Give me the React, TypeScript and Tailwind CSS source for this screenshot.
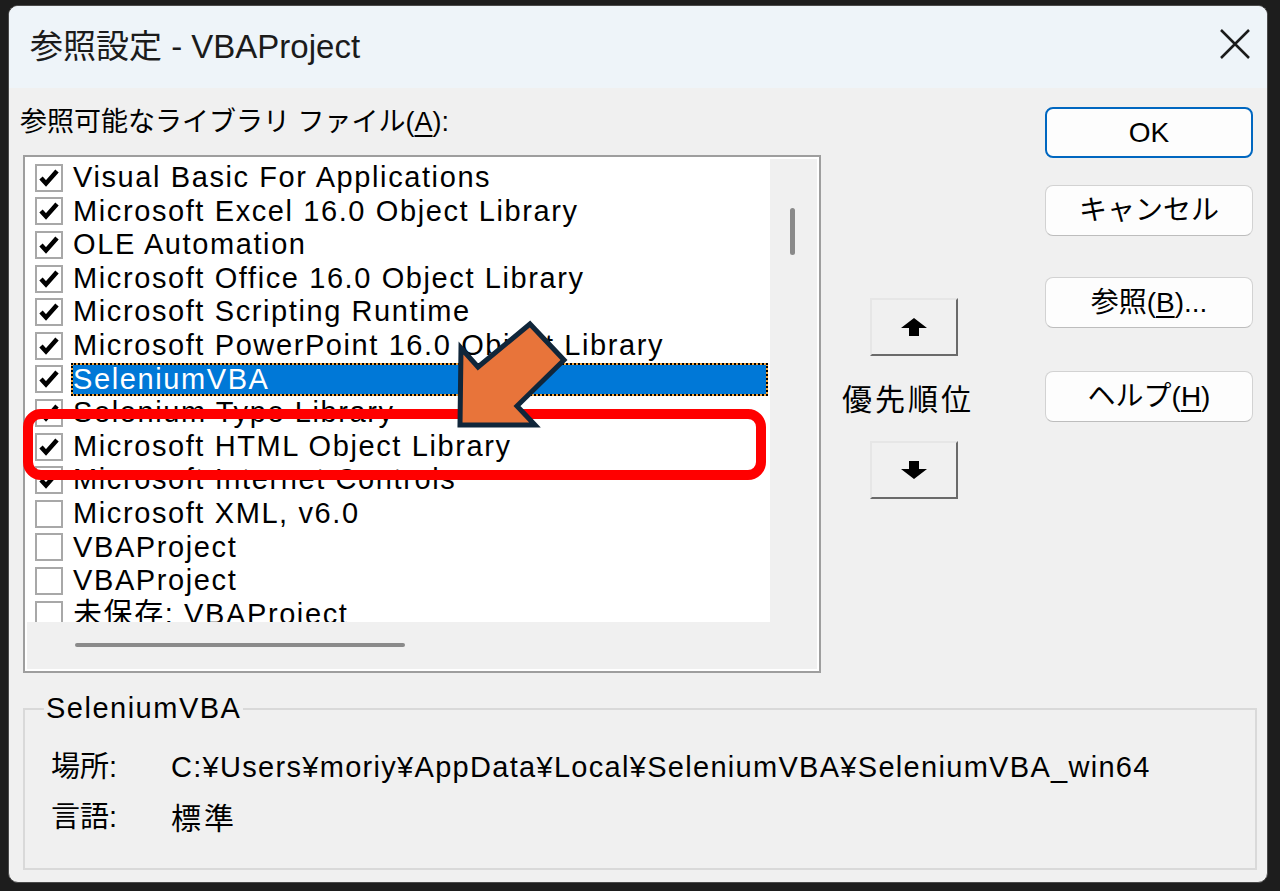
import React from 'react';

type LibRef = { name: string; checked: boolean; selected?: boolean };

const refs: LibRef[] = [
  { name: 'Visual Basic For Applications', checked: true },
  { name: 'Microsoft Excel 16.0 Object Library', checked: true },
  { name: 'OLE Automation', checked: true },
  { name: 'Microsoft Office 16.0 Object Library', checked: true },
  { name: 'Microsoft Scripting Runtime', checked: true },
  { name: 'Microsoft PowerPoint 16.0 Object Library', checked: true },
  { name: 'SeleniumVBA', checked: true, selected: true },
  { name: 'Selenium Type Library', checked: true },
  { name: 'Microsoft HTML Object Library', checked: true },
  { name: 'Microsoft Internet Controls', checked: true },
  { name: 'Microsoft XML, v6.0', checked: false },
  { name: 'VBAProject', checked: false },
  { name: 'VBAProject', checked: false },
  { name: '未保存: VBAProject', checked: false },
];

const CheckBox: React.FC<{ checked: boolean }> = ({ checked }) => (
  <div className="w-[28px] h-[28px] shrink-0 border-2 border-[#a8a8a8] bg-white flex items-center justify-center">
    {checked && (
      <svg width="22" height="22" viewBox="0 0 22 22">
        <polyline points="3,11 8,16.5 19,4" fill="none" stroke="#000" strokeWidth="4.5" strokeLinejoin="miter" />
      </svg>
    )}
  </div>
);

const RefRow: React.FC<{ item: LibRef }> = ({ item }) => (
  <div className="flex h-[33.6px] items-center shrink-0">
    <div className="ml-[8px]">
      <CheckBox checked={item.checked} />
    </div>
    <div className={`ml-[8px] mr-[2px] flex-1 h-[33px] ${item.selected ? 'bg-[#f2a640]' : ''}`}>
      <div
        className={`h-full border-2 flex items-center whitespace-nowrap ${
          item.selected ? 'border-dotted border-black bg-[#0078d7] bg-clip-padding text-white' : 'border-transparent text-black'
        }`}
      >
        {item.name}
      </div>
    </div>
  </div>
);

const ClassicButton: React.FC<{ dir: 'up' | 'down' }> = ({ dir }) => (
  <button className="w-[88px] h-[58px] bg-[#f0f0f0] border-2 border-t-[#e6e6e6] border-l-[#e6e6e6] border-r-[#6a6a6a] border-b-[#6a6a6a] flex items-center justify-center">
    <svg width="26" height="18" viewBox="0 0 26 18" className={dir === 'down' ? 'rotate-180' : ''}>
      <polygon points="13,0 26,10 18,10 18,18 8,18 8,10 0,10" fill="#000" />
    </svg>
  </button>
);

const DialogButton: React.FC<{ children: React.ReactNode; primary?: boolean; className?: string }> = ({ children, primary, className }) => (
  <button
    className={`w-[208px] h-[51px] rounded-[8px] bg-[#fdfdfd] text-[28px] text-black flex items-center justify-center ${
      primary ? 'border-2 border-[#0067c0]' : 'border border-[#d2d2d2] border-b-[#bdbdbd]'
    } ${className ?? ''}`}
  >
    {children}
  </button>
);

export default function App() {
  return (
    <div className="relative w-[1280px] h-[891px] overflow-hidden bg-[#1d1d1d] pt-[5px] pl-[8px] font-['Liberation_Sans','Noto_Sans_CJK_JP',sans-serif]">
      <div className="w-[1260px] h-[878px] rounded-[10px] bg-[#f0f0f0] overflow-hidden flex flex-col border border-[#4a4a4a]">
        {/* title bar */}
        <div className="h-[82px] shrink-0 bg-[#eef4f9] flex items-center justify-between pl-[21px] pr-[17px]">
          <span className="text-[33px] text-[#1b1b1b]">参照設定 - VBAProject</span>
          <svg width="30" height="30" viewBox="0 0 30 30" className="mb-[6px]">
            <path d="M1 1 L29 29 M29 1 L1 29" stroke="#1b1b1b" strokeWidth="2.5" />
          </svg>
        </div>

        {/* dialog body */}
        <div className="flex-1 flex flex-col">
          <div className="flex items-start">
            <div className="pl-[11px] flex flex-col">
              <div className="mt-[16px] h-[36px] flex items-center text-[27px] text-black">
                参照可能なライブラリ ファイル(<span className="underline underline-offset-4">A</span>):
              </div>
              <div className="ml-[3px] mt-[15px] w-[798px] h-[518px] border-2 border-[#9e9e9e] bg-white p-[2px]">
                <div className="grid grid-cols-[743px_47px] grid-rows-[463px_47px] text-[29px] tracking-[1.6px]">
                  <div className="bg-white overflow-hidden rounded-br-[4px] pt-[2px] flex flex-col">
                    {refs.map((r, i) => (
                      <RefRow key={i} item={r} />
                    ))}
                  </div>
                  <div className="bg-[#f0f0f0] pt-[49px] pl-[20px]">
                    <div className="w-[5px] h-[47px] rounded-full bg-[#8a8a8a]" />
                  </div>
                  <div className="bg-[#f0f0f0] pt-[21px] pl-[48px]">
                    <div className="w-[330px] h-[4px] rounded-full bg-[#8a8a8a]" />
                  </div>
                  <div className="bg-[#f0f0f0]" />
                </div>
              </div>
            </div>

            {/* priority */}
            <div className="w-[186px] flex flex-col items-center">
              <div className="mt-[210px]">
                <ClassicButton dir="up" />
              </div>
              <div className="mt-[23px] h-[40px] flex items-center text-[30px] tracking-[3px] text-black -ml-[12px]">優先順位</div>
              <div className="mt-[22px]">
                <ClassicButton dir="down" />
              </div>
            </div>

            <div className="ml-[38px] flex flex-col">
              <DialogButton primary className="mt-[19px]">OK</DialogButton>
              <DialogButton className="mt-[27px]">キャンセル</DialogButton>
              <DialogButton className="mt-[41px] h-[50px]">
                参照(<span className="underline underline-offset-4">B</span>)...
              </DialogButton>
              <DialogButton className="mt-[43px] h-[50px]">
                ヘルプ(<span className="underline underline-offset-4">H</span>)
              </DialogButton>
            </div>
          </div>

          {/* selected library details */}
          <fieldset className="ml-[14px] mt-[20px] w-[1234px] h-[177px] border-2 border-[#d9d9d9] text-black">
            <legend className="ml-[19px] px-[2px] h-[32px] flex items-center text-[29px] tracking-[1.5px]">SeleniumVBA</legend>
            <div className="pl-[26px] mt-[23px] flex h-[40px] items-center">
              <span className="w-[120px] text-[29px]">場所:</span>
              <span className="text-[29px] tracking-[1.3px]">C:¥Users¥moriy¥AppData¥Local¥SeleniumVBA¥SeleniumVBA_win64</span>
            </div>
            <div className="pl-[26px] mt-[10px] flex h-[40px] items-center">
              <span className="w-[120px] text-[29px]">言語:</span>
              <span className="text-[30px] tracking-[3px]">標準</span>
            </div>
          </fieldset>
        </div>
      </div>

      {/* annotation: highlight box and arrow */}
      <div className="absolute left-[23px] top-[409px] w-[743px] h-[71px] border-[10px] border-[#ff0000] rounded-[18px]" />
      <svg className="absolute left-[440px] top-[305px]" width="150" height="140" viewBox="0 0 150 140">
        <polygon
          points="90,19 124,55 77,101 95,120 20,120 21,43 38,62"
          fill="#e8743a"
          stroke="#10263a"
          strokeWidth="5"
          strokeLinejoin="miter"
        />
      </svg>
    </div>
  );
}
